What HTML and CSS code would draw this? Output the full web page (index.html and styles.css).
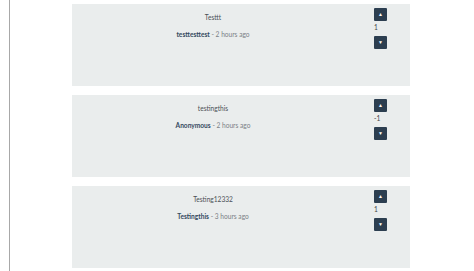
FILE: index.html
```html
<!DOCTYPE html>
<html lang="en">
<head>
    <meta charset="UTF-8">
    <title>Posts</title>
    <link rel="stylesheet" href="styles.css">
</head>
<body>
    <div class="page">
        <!-- Post list -->
        <div class="post">
            <div class="post-body">
                <p class="post-title">Testtt</p>
                <p class="post-meta"><strong>testtesttest</strong> - 2 hours ago</p>
            </div>
            <div class="votes">
                <button class="vote-btn">&#9650;</button>
                <span class="score">1</span>
                <button class="vote-btn">&#9660;</button>
            </div>
        </div>

        <div class="post">
            <div class="post-body">
                <p class="post-title">testingthis</p>
                <p class="post-meta"><strong>Anonymous</strong> - 2 hours ago</p>
            </div>
            <div class="votes">
                <button class="vote-btn">&#9650;</button>
                <span class="score">-1</span>
                <button class="vote-btn">&#9660;</button>
            </div>
        </div>

        <div class="post">
            <div class="post-body">
                <p class="post-title">Testing12332</p>
                <p class="post-meta"><strong>Testingthis</strong> - 3 hours ago</p>
            </div>
            <div class="votes">
                <button class="vote-btn">&#9650;</button>
                <span class="score">1</span>
                <button class="vote-btn">&#9660;</button>
            </div>
        </div>
    </div>
</body>
</html>
```

FILE: styles.css
```css
body {
    margin: 0;
    font-family: Lato, "Open Sans", sans-serif;
    background-color: #fff;
    color: #555;
    overflow: hidden;
}

.page {
    margin-left: 9px;
    border-left: 1px solid #a8a8a8;
    min-height: 100vh;
    padding: 4px 0 0 62px;
}

.post {
    display: grid;
    grid-template-columns: 282px 56px;
    width: 338px;
    height: 82px;
    margin-bottom: 9px;
    background-color: #eaeded;
}

.post-body {
    text-align: center;
    padding-top: 8px;
}

.post-title {
    margin: 0;
    font-size: 6.6px;
    line-height: 10px;
    color: #4a4f55;
}

.post-meta {
    margin: 7px 0 0;
    font-size: 6.6px;
    line-height: 10px;
    color: #7a7f85;
}

.post-meta strong {
    color: #34495e;
}

.votes {
    display: flex;
    flex-direction: column;
    align-items: flex-start;
    padding: 4px 0 0 20px;
}

.vote-btn {
    width: 13px;
    height: 13px;
    padding: 0;
    border: none;
    border-radius: 1px;
    background-color: #2c3e50;
    color: #fff;
    font-size: 5px;
    line-height: 13px;
}

.score {
    font-size: 6.6px;
    line-height: 10px;
    margin: 1px 0 4px;
    color: #444;
}
```
